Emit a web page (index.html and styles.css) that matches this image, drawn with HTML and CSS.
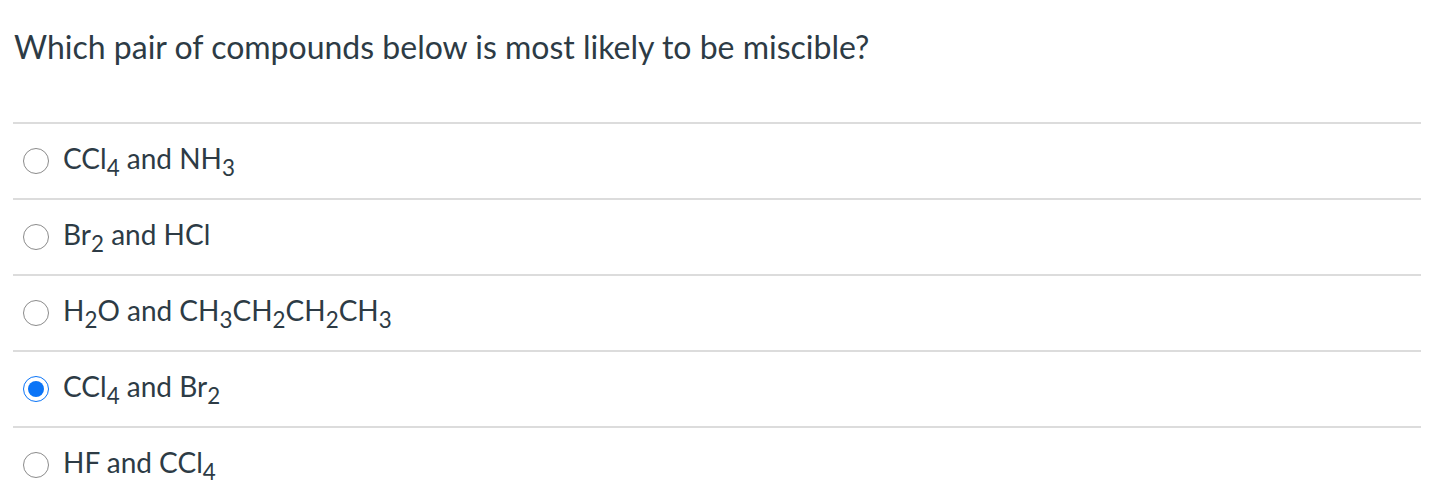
FILE: index.html
```html
<!DOCTYPE html>
<html lang="en">
<head>
<meta charset="utf-8">
<title>Question</title>
<link rel="stylesheet" href="styles.css">
</head>
<body>
<div class="question">
  <p class="prompt">Which pair of compounds below is most likely to be miscible?</p>
  <ul class="answers">
    <li class="answer"><span class="radio"></span><span class="label">CCl<sub>4</sub> and NH<sub>3</sub></span></li>
    <li class="answer"><span class="radio"></span><span class="label">Br<sub>2</sub> and HCl</span></li>
    <li class="answer"><span class="radio"></span><span class="label">H<sub>2</sub>O and CH<sub>3</sub>CH<sub>2</sub>CH<sub>2</sub>CH<sub>3</sub></span></li>
    <li class="answer"><span class="radio checked"></span><span class="label">CCl<sub>4</sub> and Br<sub>2</sub></span></li>
    <li class="answer"><span class="radio"></span><span class="label">HF and CCl<sub>4</sub></span></li>
  </ul>
</div>
</body>
</html>
```
FILE: styles.css
```css
html, body {
  margin: 0;
  padding: 0;
  background: #ffffff;
}
body {
  font-family: Lato, "Open Sans", sans-serif;
  color: #2d3b45;
}
.question {
  padding: 0 22px 0 13px;
}
.prompt {
  margin: 0;
  padding: 25px 0 0 1px;
  height: 122px;
  box-sizing: border-box;
  font-size: 32px;
  line-height: 44px;
}
.answers {
  list-style: none;
  margin: 0;
  padding: 0;
}
.answer {
  display: flex;
  align-items: center;
  height: 76px;
  box-sizing: border-box;
  border-top: 2px solid #dcdcdc;
  padding-left: 10px;
}
.radio {
  width: 26px;
  height: 26px;
  box-sizing: border-box;
  border: 1.3px solid #8b8b8b;
  border-radius: 50%;
  flex: none;
  background: #fff;
  display: flex;
  align-items: center;
  justify-content: center;
}
.radio.checked {
  border: 1.5px solid #0a74f7;
}
.radio.checked::after {
  content: "";
  width: 16px;
  height: 16px;
  border-radius: 50%;
  background: #0a74f7;
}
.label {
  margin-left: 14px;
  font-size: 28px;
  line-height: 34px;
  margin-top: -6px;
}
.label sub {
  font-size: 0.8em;
  vertical-align: -0.3em;
  line-height: 0;
}
```
